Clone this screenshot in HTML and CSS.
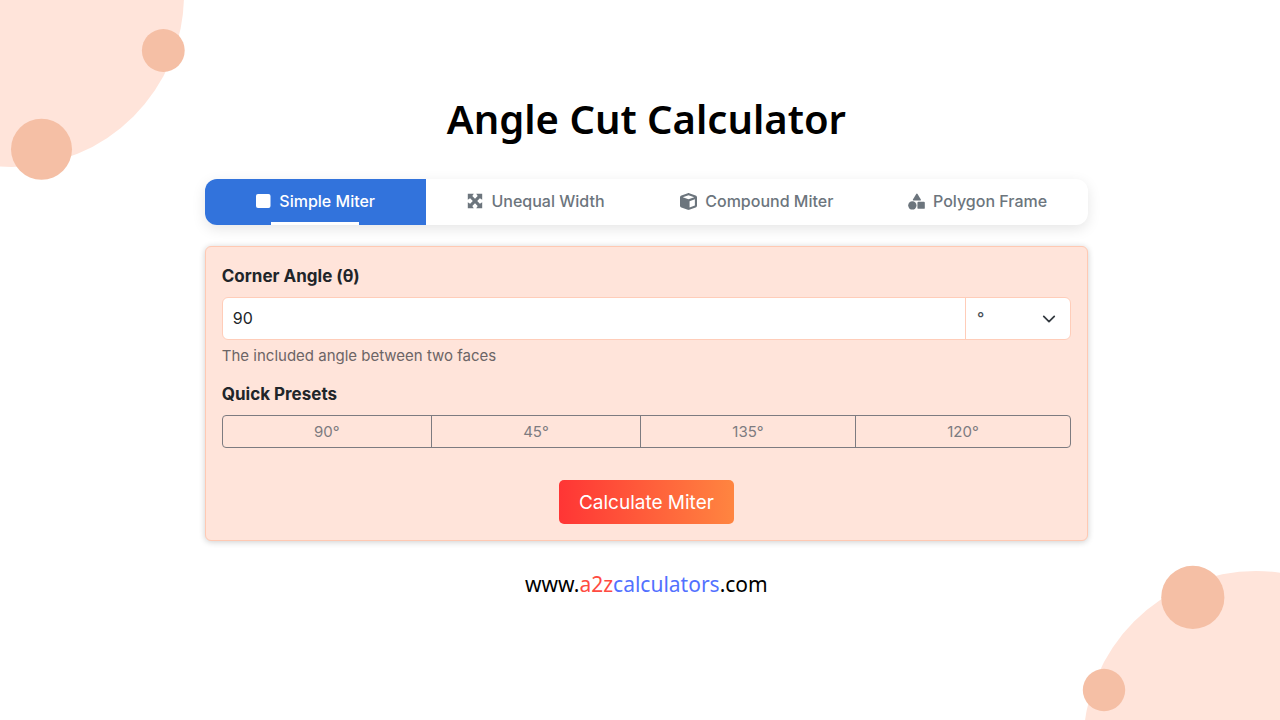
FILE: index.html
```html
<!DOCTYPE html>
<html lang="en">
<head>
    <meta charset="UTF-8">
    <meta name="viewport" content="width=device-width, initial-scale=1.0">
    <title>Angle Cut Calculator</title>
    <link rel="stylesheet" href="styles.css">
</head>
<body>
    <!-- Corner decorations -->
    <svg class="corner corner-top" width="190" height="184" viewBox="0 0 190 184" aria-hidden="true">
        <circle class="blob" cx="11.5" cy="-5.5" r="172.5"/>
        <circle class="dot" cx="163.3" cy="50.5" r="21.4"/>
        <circle class="dot" cx="41.5" cy="149.2" r="30.5"/>
    </svg>
    <svg class="corner corner-bottom" width="200" height="160" viewBox="0 0 200 160" aria-hidden="true">
        <circle class="blob" cx="176" cy="183.5" r="172.5"/>
        <circle class="dot" cx="112.8" cy="37.4" r="31.6"/>
        <circle class="dot" cx="24" cy="130" r="21.2"/>
    </svg>

    <main class="page">
        <h1>Angle Cut Calculator</h1>

        <nav class="tabs">
            <button type="button" class="tab active">
                <svg width="16" height="16" viewBox="0 0 16 16" aria-hidden="true"><rect x="1" y="1" width="14.5" height="14" rx="2"/></svg>
                Simple Miter
            </button>
            <button type="button" class="tab">
                <svg width="16" height="16" viewBox="0 0 16 16" aria-hidden="true"><path d="M.8.8h6L5.300 3.100 8 5.800l2.700-2.700L9.200.8h6v6l-2.300-1.500L10.200 8l2.700 2.700 2.300-1.500v6h-6l1.500-2.300L8 10.200l-2.700 2.700 1.500 2.300h-6v-6l2.300 1.500L5.800 8 3.100 5.300.8 6.800z"/></svg>
                Unequal Width
            </button>
            <button type="button" class="tab">
                <svg width="17" height="17" viewBox="0 0 512 512" aria-hidden="true"><path d="M234.500 5.700c13.900-5 29.100-5 43.100 0l192 68.600C495 83.400 512 107.500 512 134.600v242.900c0 27-17 51.200-42.500 60.300l-192 68.600c-13.900 5-29.100 5-43.100 0l-192-68.600C17 428.600 0 404.500 0 377.400V134.600c0-27 17-51.200 42.500-60.300zM256 66 82.300 128 256 190l173.700-62zm32 368.600 160-57.100v-188l-160 57.100z"/></svg>
                Compound Miter
            </button>
            <button type="button" class="tab">
                <svg width="17" height="17" viewBox="0 0 18 18" aria-hidden="true"><path d="M8.700 1q.7-1 1.400 0l3.500 6q.5 1-.6 1H5.800q-1.100 0-.6-1z"/><circle cx="4.600" cy="13.200" r="4.400"/><rect x="10" y="9.300" width="7.800" height="7.500" rx="1"/></svg>
                Polygon Frame
            </button>
        </nav>

        <form class="card" id="miterForm">
            <label class="field-label" for="angle">Corner Angle (θ)</label>
            <div class="input-group">
                <input type="text" id="angle" name="angle" inputmode="decimal" value="90">
                <div class="unit">
                    <select id="unit" name="unit" aria-label="Angle unit">
                        <option value="deg">°</option>
                        <option value="rad">rad</option>
                    </select>
                    <svg width="14" height="14" viewBox="0 0 16 16" aria-hidden="true"><path d="m2 5 6 6 6-6"/></svg>
                </div>
            </div>
            <p class="hint">The included angle between two faces</p>

            <h2 class="field-label">Quick Presets</h2>
            <div class="presets">
                <button type="button">90°</button>
                <button type="button">45°</button>
                <button type="button">135°</button>
                <button type="button">120°</button>
            </div>

            <button type="submit" class="calculate">Calculate Miter</button>
        </form>

        <a class="site" href="#">www.<span class="red">a2z</span><span class="blue">calculators</span>.com</a>
    </main>

    <script>
        document.querySelectorAll('.tab').forEach(function(tab) {
            tab.addEventListener('click', function() {
                document.querySelector('.tab.active').classList.remove('active');
                tab.classList.add('active');
            });
        });

        document.querySelectorAll('.presets button').forEach(function(preset) {
            preset.addEventListener('click', function() {
                document.getElementById('angle').value = parseInt(preset.textContent, 10);
            });
        });

        document.getElementById('miterForm').addEventListener('submit', function(event) {
            event.preventDefault();
        });
    </script>
</body>
</html>
```

FILE: styles.css
```css
* {
    box-sizing: border-box;
}
body {
    margin: 0;
    min-height: 100vh;
    position: relative;
    background-color: #fff;
    color: #212529;
    font-family: Inter, sans-serif;
    font-size: 16px;
}
button, input, select {
    font: inherit;
}

/* Corner decorations */
.corner {
    position: absolute;
    z-index: -1;
}
.corner-top {
    top: 0;
    left: 0;
}
.corner-bottom {
    right: 0;
    bottom: 0;
}
.blob {
    fill: #ffe4da;
}
.dot {
    fill: #f5bfa5;
}

.page {
    padding: 91px 15% 40px 16%;
    display: flex;
    flex-direction: column;
}
h1 {
    margin: 0 0 32px;
    text-align: center;
    color: #000;
    font-family: "Noto Sans", sans-serif;
    font-size: 40px;
    font-weight: 600;
    line-height: 56px;
}

/* Tabs */
.tabs {
    display: grid;
    grid-template-columns: repeat(4, 1fr);
    margin-bottom: 21px;
    border-radius: 12px;
    background-color: #fff;
    box-shadow: 0 4px 14px rgba(0, 0, 0, 0.1);
    overflow: hidden;
}
.tab {
    position: relative;
    display: flex;
    align-items: center;
    justify-content: center;
    gap: 8px;
    height: 46px;
    padding: 0 0 2px;
    border: none;
    background: none;
    color: #6c757d;
    font-weight: 500;
    cursor: pointer;
}
.tab svg {
    fill: currentColor;
}
.tab.active {
    background-color: #3273dc;
    color: #fff;
}
.tab.active::after {
    content: "";
    position: absolute;
    bottom: 0;
    left: 30%;
    width: 40%;
    height: 3px;
    background-color: #fff;
}

/* Calculator card */
.card {
    display: flex;
    flex-direction: column;
    padding: 16px;
    border: 1px solid #ffc9b3;
    border-radius: 6px;
    background-color: #ffe4da;
    box-shadow: 0 1px 6px rgba(0, 0, 0, 0.2);
}
.field-label {
    margin: 0 0 8px;
    font-size: 17px;
    font-weight: 700;
    line-height: 26px;
}
.input-group {
    display: flex;
    height: 43px;
    border: 1px solid #ffcdb9;
    border-radius: 6px;
    background-color: #fff;
    overflow: hidden;
}
.input-group input {
    flex: 1;
    min-width: 0;
    padding: 0 10px 2px;
    border: none;
    background: none;
    color: #212529;
}
.unit {
    display: flex;
    align-items: center;
    width: 105px;
    padding-right: 14px;
    border-left: 1px solid #ffcdb9;
}
.unit select {
    flex: 1;
    height: 100%;
    padding: 0 11px 2px;
    appearance: none;
    border: none;
    background: none;
    color: #495057;
    font-weight: 500;
}
.unit svg {
    fill: none;
    stroke: #343a40;
    stroke-width: 2;
    stroke-linecap: round;
    stroke-linejoin: round;
}
.hint {
    margin: 4px 0 14px;
    color: #6c6566;
    font-size: 15px;
    line-height: 23px;
}
.presets {
    display: flex;
    height: 33px;
    margin-bottom: 32px;
    border: 1px solid #7d7b80;
    border-radius: 4px;
}
.presets button {
    flex: 1 1 auto;
    padding: 0;
    border: none;
    background: none;
    color: #7d7b80;
    font-size: 15px;
    cursor: pointer;
}
.presets button + button {
    border-left: 1px solid #7d7b80;
}
.calculate {
    align-self: center;
    height: 44px;
    padding: 0 20px;
    border: none;
    border-radius: 5px;
    background: linear-gradient(to right, #ff3535, #ff8540);
    color: #fff;
    font-size: 19px;
    cursor: pointer;
}

.site {
    align-self: center;
    margin-top: 28px;
    color: #000;
    font-family: "Noto Sans", sans-serif;
    font-size: 21px;
    line-height: 30px;
    text-decoration: none;
}
.red {
    color: #ff4b41;
}
.blue {
    color: #5271ff;
}
```
